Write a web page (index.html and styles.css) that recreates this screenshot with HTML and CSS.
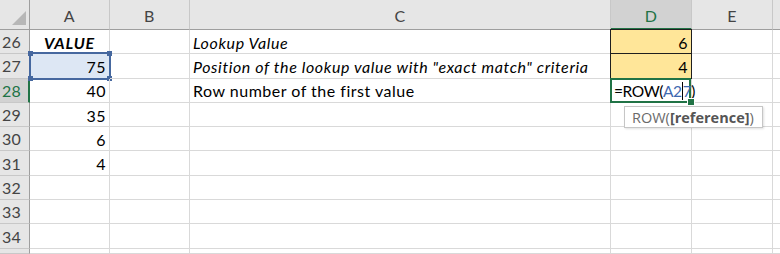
FILE: index.html
```html
<!DOCTYPE html>
<html>
  <head>
    <link rel="stylesheet" href="styles.css">
  </head>
  <body>
    <div class="sheet">
      <!-- column headers -->
      <div class="hd corner"><span class="tri"></span></div>
      <div class="hd">A</div>
      <div class="hd">B</div>
      <div class="hd">C</div>
      <div class="hd sel-col">D</div>
      <div class="hd">E</div>
      <div class="hd last"></div>

      <!-- 26 -->
      <div class="rh">26</div>
      <div class="c center bi">VALUE</div>
      <div class="c"></div>
      <div class="c it">Lookup Value</div>
      <div class="c num yellow"><span class="box"></span>6</div>
      <div class="c"></div>
      <div class="c last"></div>

      <!-- 27 -->
      <div class="rh">27</div>
      <div class="c num ref">75<span class="refbox"><i class="h tl"></i><i class="h tr"></i><i class="h bl"></i><i class="h br"></i></span></div>
      <div class="c"></div>
      <div class="c it">Position of the lookup value with "exact match" criteria</div>
      <div class="c num yellow"><span class="box"></span>4</div>
      <div class="c"></div>
      <div class="c last"></div>

      <!-- 28 -->
      <div class="rh sel-row">28</div>
      <div class="c num">40</div>
      <div class="c"></div>
      <div class="c">Row number of the first value</div>
      <div class="c active">
        <span class="formula">=ROW(<span class="blue">A2</span><span class="caret"></span><span class="blue">7</span>)</span>
        <span class="fill"></span>
        <div class="tip">ROW(<b>[reference]</b>)</div>
      </div>
      <div class="c"></div>
      <div class="c last"></div>

      <!-- 29 -->
      <div class="rh">29</div>
      <div class="c num">35</div>
      <div class="c"></div><div class="c"></div><div class="c"></div><div class="c"></div><div class="c last"></div>

      <!-- 30 -->
      <div class="rh">30</div>
      <div class="c num">6</div>
      <div class="c"></div><div class="c"></div><div class="c"></div><div class="c"></div><div class="c last"></div>

      <!-- 31 -->
      <div class="rh">31</div>
      <div class="c num">4</div>
      <div class="c"></div><div class="c"></div><div class="c"></div><div class="c"></div><div class="c last"></div>

      <div class="rh">32</div>
      <div class="c"></div><div class="c"></div><div class="c"></div><div class="c"></div><div class="c"></div><div class="c last"></div>
      <div class="rh">33</div>
      <div class="c"></div><div class="c"></div><div class="c"></div><div class="c"></div><div class="c"></div><div class="c last"></div>
      <div class="rh">34</div>
      <div class="c"></div><div class="c"></div><div class="c"></div><div class="c"></div><div class="c"></div><div class="c last"></div>
      <div class="rh"></div>
      <div class="c"></div><div class="c"></div><div class="c"></div><div class="c"></div><div class="c"></div><div class="c last"></div>
    </div>
  </body>
</html>
```

FILE: styles.css
```css
body { margin:0; background:#fff; font-family:Lato, "Liberation Sans", sans-serif; font-size:16px; color:#000; overflow:hidden; height:254px; }

.sheet { display:grid; grid-template-columns:30px 80px 80px 421px 81px 81px 1fr;
         grid-template-rows:30px repeat(9, 24.3px) 1fr; width:780px; height:254px; letter-spacing:0.5px; }

/* headers */
.hd { background:#e6e6e6; border-right:1px solid #c8c8c8; border-bottom:1px solid #9e9e9e;
      display:flex; align-items:center; justify-content:center; color:#444; padding-top:2px; box-sizing:border-box; }
.hd.corner { border-right-color:#9e9e9e; position:relative; }
.tri { position:absolute; right:3px; bottom:4px; width:0; height:0;
       border-left:14px solid transparent; border-bottom:14px solid #b7b7b7; }
.hd.sel-col { background:#d2d2d2; color:#217346; border-bottom:2px solid #217346; }
.hd.last { border-right:none; }

.rh { background:#e6e6e6; border-right:1px solid #9e9e9e; border-bottom:1px solid #c8c8c8;
      display:flex; align-items:center; padding-left:2px; color:#444; box-sizing:border-box; letter-spacing:0.3px; }
.rh.sel-row { background:#d2d2d2; color:#217346; border-right:2px solid #217346; }

/* cells */
.c { border-right:1px solid #d9d9d9; border-bottom:1px solid #d9d9d9; box-sizing:border-box;
     display:flex; align-items:center; padding:1px 3px 0 3px; white-space:nowrap; position:relative; }
.c.last { border-right:none; }
.num { justify-content:flex-end; }
.center { justify-content:center; }
.bi { font-weight:bold; font-style:italic; letter-spacing:0.8px; }
.it { font-style:italic; letter-spacing:0.6px; }

.yellow { background:#ffe699; }
.box { position:absolute; left:-1px; top:-1px; right:-1px; bottom:-1px; border:1px solid #1f1f1f; }

.ref { background:#dde7f4; }
.refbox { position:absolute; left:-1px; top:-2px; right:-2px; bottom:-2px; border:2px solid #46689f; }
.h { position:absolute; width:5px; height:5px; background:#46689f; }
.h.tl { left:-3px; top:-3px; }
.h.tr { right:-3px; top:-3px; }
.h.bl { left:-3px; bottom:-3px; }
.h.br { right:-3px; bottom:-3px; }

.active { overflow:visible; z-index:2; }
.active::before { content:""; position:absolute; left:-1px; top:-1px; right:0; bottom:-1px; border:2px solid #217346; }
.formula { position:relative; font-size:15.5px; letter-spacing:-0.4px; }
.blue { color:#3f69b0; }
.caret { display:inline-block; width:1px; height:18px; background:#000; vertical-align:-3px; }
.fill { position:absolute; right:-4px; bottom:-4px; width:6px; height:6px; background:#217346; border:1px solid #fff; }

.tip { position:absolute; left:13px; top:27px; padding:1px 8px 0 7px; height:22px; box-sizing:border-box;
       background:#fff; border:1px solid #c6c6c6; color:#6a6a6a; font-family:"Open Sans", sans-serif; font-size:14.5px;
       letter-spacing:0; display:flex; align-items:center; box-shadow:1px 1px 2px rgba(0,0,0,0.12); }
.tip b { color:#555; }
```
